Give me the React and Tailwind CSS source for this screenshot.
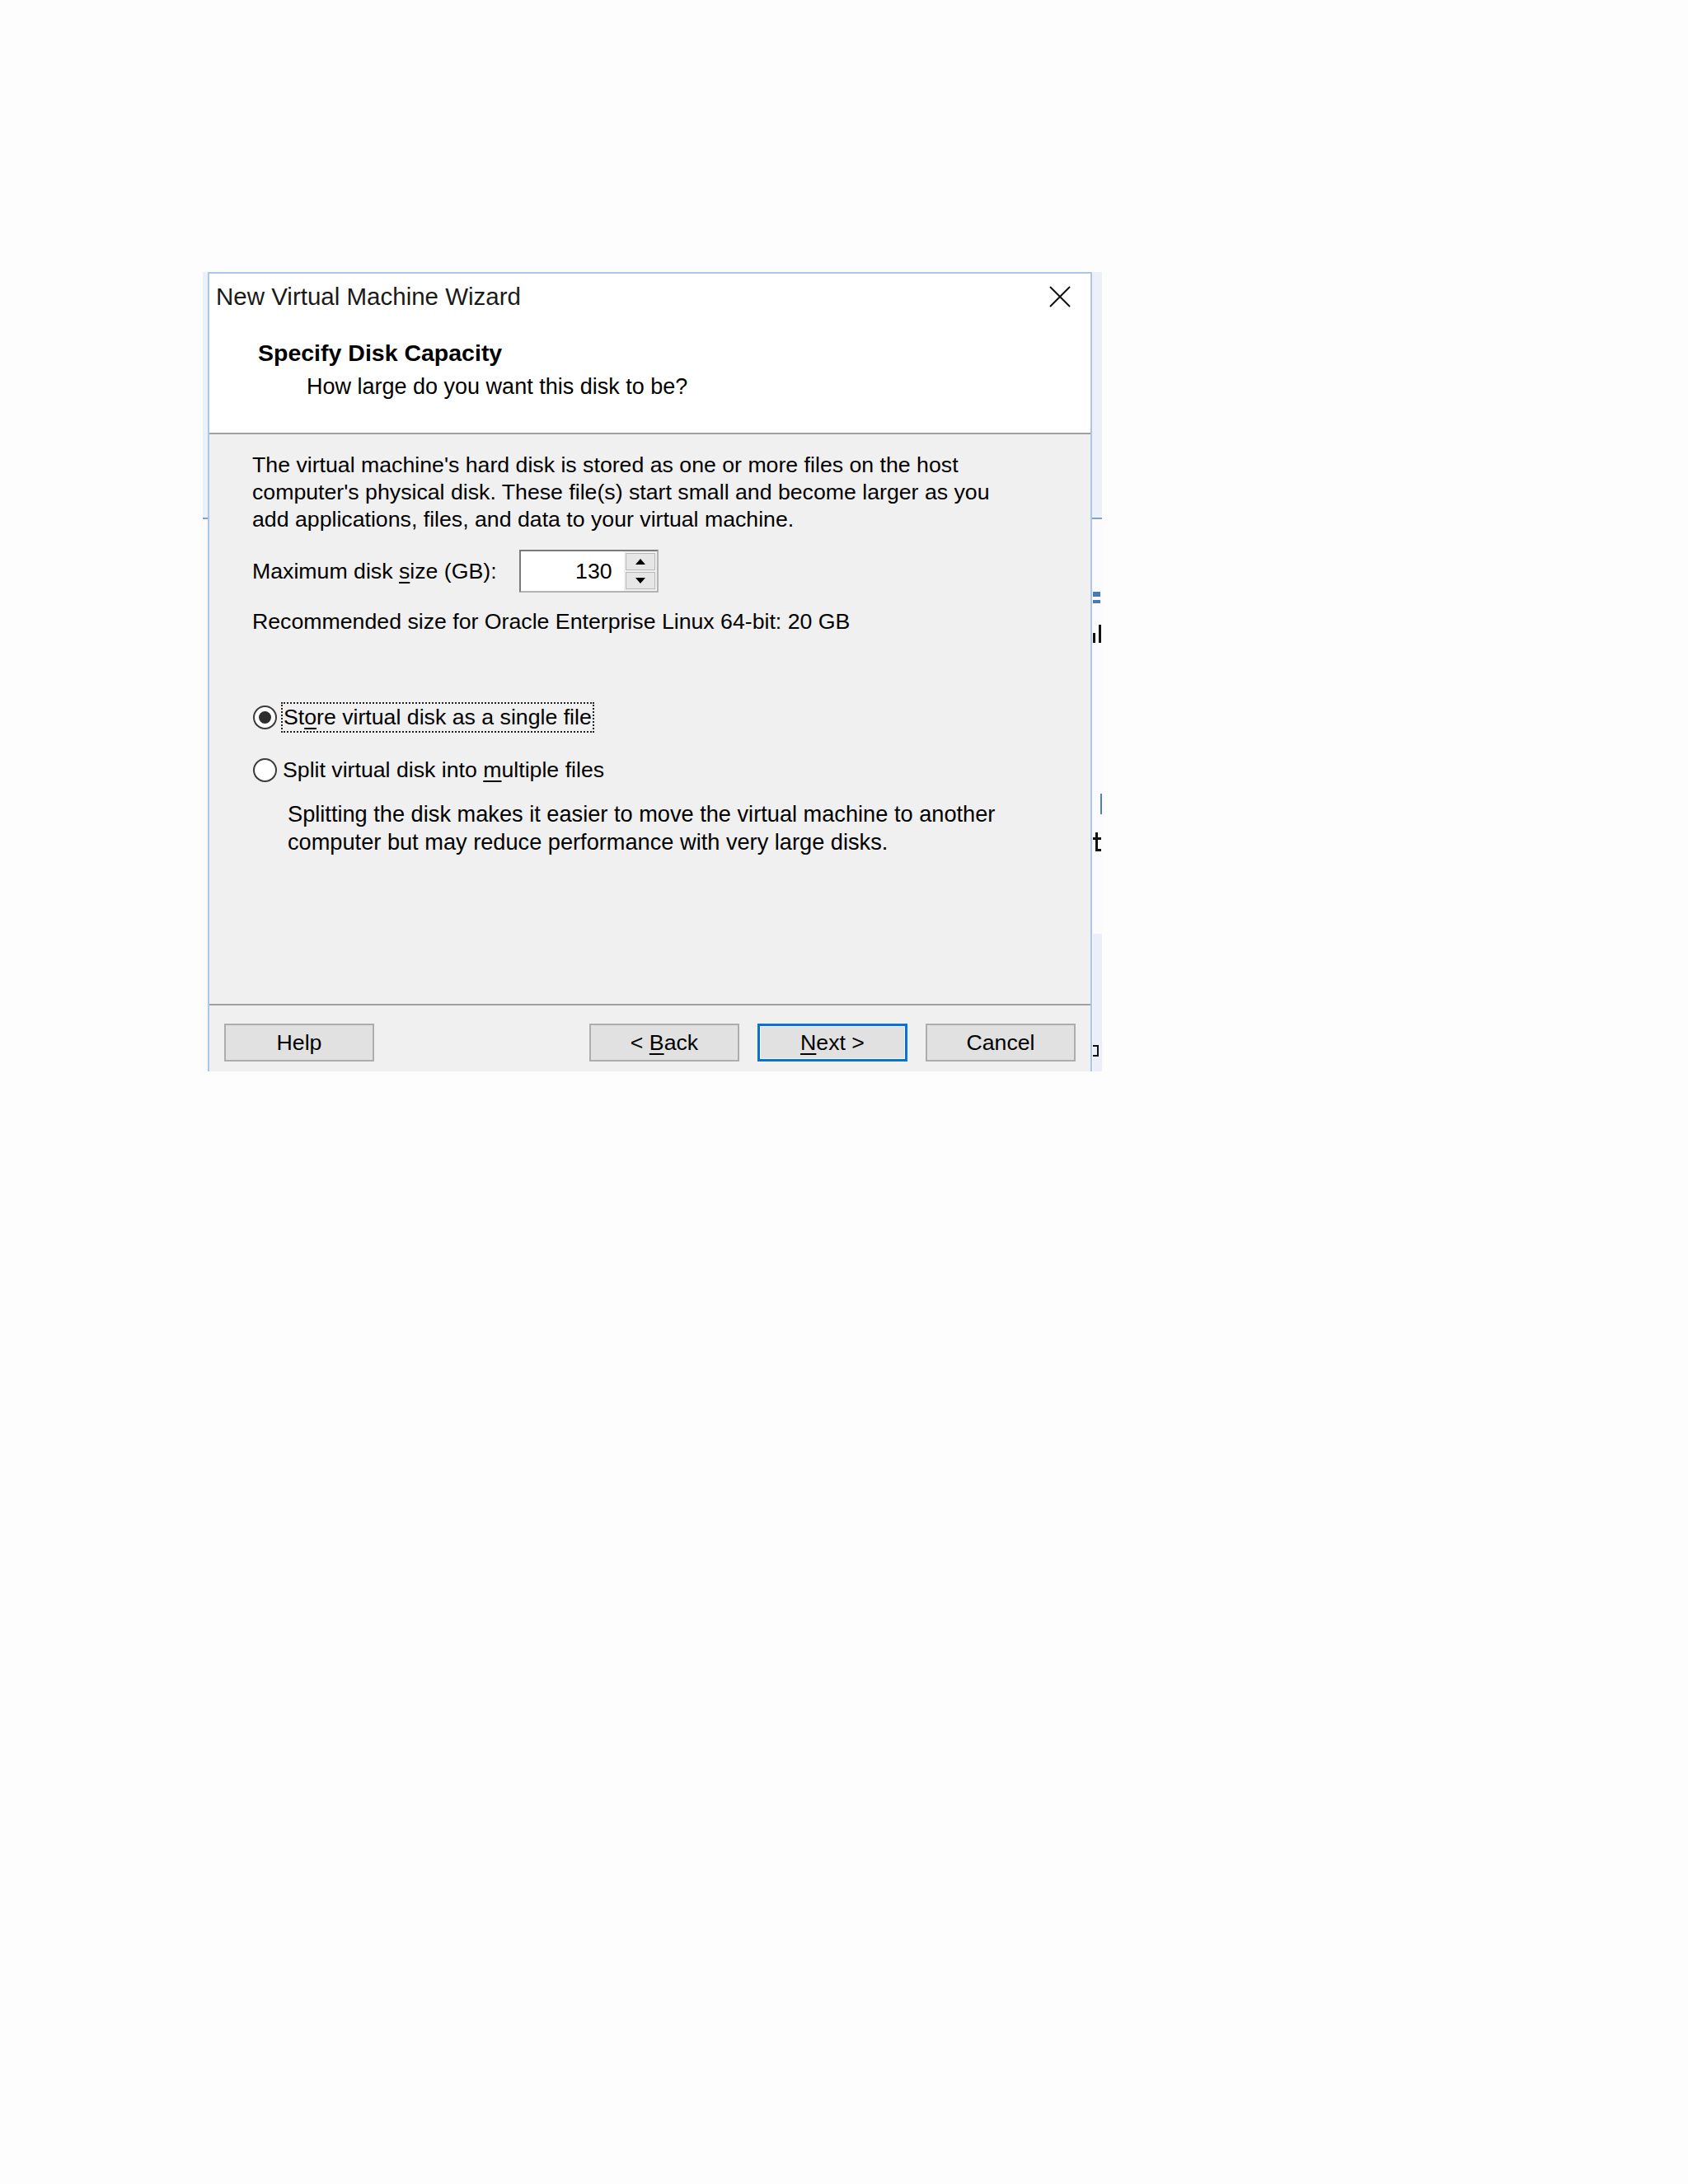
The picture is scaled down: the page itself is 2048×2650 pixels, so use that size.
import React from 'react';

const FONT = { fontFamily: '"Liberation Sans", Arial, sans-serif' };

// radio button drawn like the classic Windows one
function Radio({ checked }) {
  return (
    <span className="flex h-[29px] w-[29px] shrink-0 items-center justify-center rounded-full border-2 border-[#3c3c3c] bg-white">
      {checked && <span className="h-[15px] w-[15px] rounded-full bg-[#2e2e2e]" />}
    </span>
  );
}

function Button({ children, primary }) {
  return (
    <button
      className={
        primary
          ? 'flex h-[46px] w-[182px] items-center justify-center border-[3px] border-[#0a72d6] bg-[#e1e1e1] text-black outline outline-1 -outline-offset-[4px] outline-[#f4f8fc]'
          : 'flex h-[46px] w-[182px] items-center justify-center border-2 border-[#adadad] bg-[#e1e1e1] text-black'
      }
    >
      <span className="whitespace-pre">{children}</span>
    </button>
  );
}

function SpinBox({ value }) {
  return (
    <div className="flex h-[52px] w-[169px] border-2 border-[#b4b4b4] border-l-[#7a7a7a] border-t-[#7a7a7a] bg-white">
      <div className="flex flex-1 items-center justify-end pr-[14px]">{value}</div>
      <div className="flex w-[40px] flex-col gap-[2px] bg-[#f0f0f0] p-[2px]">
        <div className="flex flex-1 items-center justify-center border border-[#b9b9b9] bg-[#e6e6e6]">
          <svg width="12" height="7" viewBox="0 0 12 7"><path d="M6 0 L12 7 L0 7 Z" fill="#000" /></svg>
        </div>
        <div className="flex flex-1 items-center justify-center border border-[#b9b9b9] bg-[#e6e6e6]">
          <svg width="12" height="7" viewBox="0 0 12 7"><path d="M0 0 L12 0 L6 7 Z" fill="#000" /></svg>
        </div>
      </div>
    </div>
  );
}

export default function App() {
  return (
    <div className="relative min-h-[2650px] w-[2048px] bg-[#fdfdfd] text-black" style={FONT}>
      {/* window behind the wizard, only slivers of its right edge peek out */}
      <div className="absolute left-[246px] top-[330px] h-[970px] w-[1091px] overflow-hidden bg-[#fbfbfe]">
        <div className="h-[298px] bg-[#eef0f9]" />
        <div className="h-[2px] bg-[#7ea2c8]" />
        <div className="absolute left-[1080px] top-[388px] h-[6px] w-[9px] bg-[#4a78b6]" />
        <div className="absolute left-[1080px] top-[398px] h-[4px] w-[9px] bg-[#4a78b6]" />
        <div className="absolute left-[1080px] top-[438px] h-[12px] w-[3px] bg-[#111]" />
        <div className="absolute left-[1087px] top-[428px] h-[22px] w-[3px] bg-[#111]" />
        <div className="absolute left-[1089px] top-[633px] h-[25px] w-[3px] bg-[#4f7fbd]" />
        <div className="absolute left-[1083px] top-[680px] h-[22px] w-[3px] bg-[#111]" />
        <div className="absolute left-[1080px] top-[686px] h-[3px] w-[10px] bg-[#111]" />
        <div className="absolute left-[1083px] top-[700px] h-[3px] w-[7px] bg-[#111]" />
        <div className="absolute left-[1080px] top-[803px] h-[167px] w-[11px] bg-[#eceef9]" />
        <div className="absolute left-[1080px] top-[938px] h-[14px] w-[7px] border-2 border-l-0 border-[#111]" />
      </div>

      <div className="relative pl-[252px] pt-[330px]">
        <div className="flex w-[1073px] flex-col border-x-2 border-t-2 border-[#aac6e8] text-[26.7px]">
          {/* header */}
          <div className="h-[193px] bg-white">
            <div className="flex h-[56px] items-center justify-between pl-[8px] pr-[24px]">
              <span className="text-[29.5px] text-[#1a1a1a]">New Virtual Machine Wizard</span>
              <svg width="26" height="26" viewBox="0 0 26 26">
                <path d="M1 1 L25 25 M25 1 L1 25" stroke="#111" strokeWidth="2" />
              </svg>
            </div>
            <div className="mt-[23px] pl-[59px] text-[28.5px] font-bold leading-[34px]">Specify Disk Capacity</div>
            <div className="mt-[7px] pl-[118px] text-[27px] leading-[34px]">How large do you want this disk to be?</div>
          </div>
          <div className="h-[2px] bg-[#a0a0a0]" />

          {/* body */}
          <div className="flex h-[691px] flex-col bg-[#f0f0f1] pl-[52px]">
            <p className="pt-[21px] leading-[33px]">
              The virtual machine's hard disk is stored as one or more files on the host
              <br />
              computer's physical disk. These file(s) start small and become larger as you
              <br />
              add applications, files, and data to your virtual machine.
            </p>

            <div className="mt-[20px] flex items-center gap-[27px]">
              <span>
                Maximum disk <span className="underline underline-offset-[4px]">s</span>ize (GB):
              </span>
              <SpinBox value="130" />
            </div>

            <div className="mt-[19px] leading-[33px]">Recommended size for Oracle Enterprise Linux 64-bit: 20 GB</div>

            <div className="ml-[1px] mt-[79px] flex h-[40px] items-center gap-[5px]">
              <Radio checked />
              <span className="border-2 border-dotted border-[#222] px-[1px] leading-[33px]">
                St<span className="underline underline-offset-[4px]">o</span>re virtual disk as a single file
              </span>
            </div>

            <div className="ml-[1px] mt-[24px] flex h-[40px] items-center gap-[7px]">
              <Radio />
              <span>
                Split virtual disk into <span className="underline underline-offset-[4px]">m</span>ultiple files
              </span>
            </div>

            <p className="mt-[17px] pl-[43px] text-[27.2px] leading-[34px]">
              Splitting the disk makes it easier to move the virtual machine to another
              <br />
              computer but may reduce performance with very large disks.
            </p>
          </div>

          {/* footer */}
          <div className="h-[2px] bg-[#a0a0a0]" />
          <div className="flex items-center bg-[#f0f0f1] pb-[12px] pl-[18px] pr-[18px] pt-[22px]">
            <Button>Help</Button>
            <div className="ml-auto flex gap-[22px]">
              <Button>
                {'< '}<span className="underline underline-offset-[4px]">B</span>ack
              </Button>
              <Button primary>
                <span className="underline underline-offset-[4px]">N</span>{'ext >'}
              </Button>
              <Button>Cancel</Button>
            </div>
          </div>
        </div>
      </div>
    </div>
  );
}
